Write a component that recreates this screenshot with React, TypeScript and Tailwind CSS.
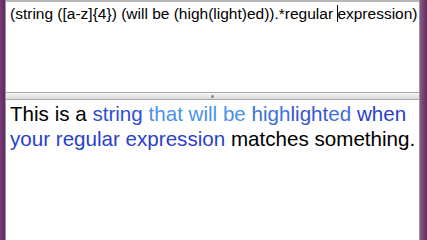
import React from "react";

export default function App() {
  const f = { fontFamily: '"Liberation Sans", Arial, sans-serif' };
  return (
    <div className="w-[427px] h-[240px] flex bg-[#6a2f6c] overflow-hidden" style={f}>
      <div className="w-[5px] bg-gradient-to-r from-[#7a3a78] to-[#5a2a63]" />
      <div className="w-[415px] flex flex-col bg-white border-x border-[#9a9a9a]">
        <div className="h-[92px] border-t-2 border-[#b8b8b8] pl-[4px] pt-[3px] text-[15.5px] leading-[17px] text-black whitespace-nowrap">
          (string ([a-z]{"{4}"}) (will be (high(light)ed)).*regular <span className="border-l border-black -mr-px" />expression)
        </div>
        <div className="h-[8px] border-y border-[#a8a8a8] bg-gradient-to-b from-[#f4f4f4] to-[#dcdcdc] flex items-center justify-center">
          <div className="w-[3px] h-[3px] rounded-full bg-[#8a8a8a]" />
        </div>
        <div className="flex-1 pl-[4px] pt-[1px] text-[20.6px] leading-[25px] text-black">
          This is a <span className="text-[#2d4fd3]">string </span>
          <span className="text-[#4b92ea]">that</span>
          <span className="text-[#2d4fd3]"> </span>
          <span className="text-[#4b92ea]">will be </span>
          <span className="text-[#3d6fe0]">high</span>
          <span className="text-[#3a56d0]">light</span>
          <span className="text-[#3d6fe0]">ed</span>
          <span className="text-[#2a3fcc]"> when your regular expression</span> matches something.
        </div>
      </div>
      <div className="flex-1 bg-gradient-to-r from-[#8a5a88] to-[#5e2a60]" />
    </div>
  );
}
